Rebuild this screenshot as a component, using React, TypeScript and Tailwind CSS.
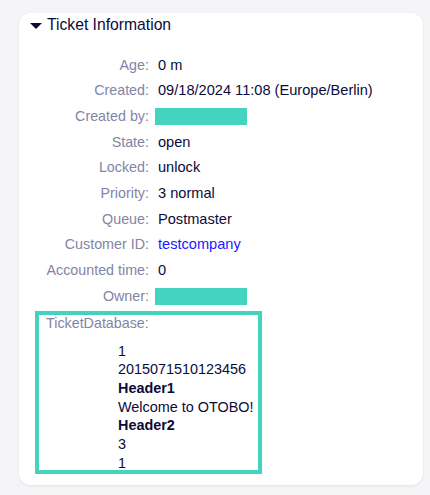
import React from 'react';

type Row = { label: string; value?: string; link?: boolean; redacted?: boolean };

const rows: Row[] = [
  { label: 'Age', value: '0 m' },
  { label: 'Created', value: '09/18/2024 11:08 (Europe/Berlin)' },
  { label: 'Created by', redacted: true },
  { label: 'State', value: 'open' },
  { label: 'Locked', value: 'unlock' },
  { label: 'Priority', value: '3 normal' },
  { label: 'Queue', value: 'Postmaster' },
  { label: 'Customer ID', value: 'testcompany', link: true },
  { label: 'Accounted time', value: '0' },
  { label: 'Owner', redacted: true },
];

// values shown in the dynamic field block, bold ones are headers
const dbLines: { text: string; bold?: boolean }[] = [
  { text: '1' },
  { text: '2015071510123456' },
  { text: 'Header1', bold: true },
  { text: 'Welcome to OTOBO!' },
  { text: 'Header2', bold: true },
  { text: '3' },
  { text: '1' },
];

const CaretDown = () => (
  <svg width="12" height="6" viewBox="0 0 12 6" className="mr-[5px] mt-[1px] shrink-0">
    <path d="M0 0 L12 0 L6 6 Z" fill="#0b0b3b" />
  </svg>
);

export default function App() {
  return (
    <div
      className="h-[495px] w-[430px] bg-[#f5f5f8] pt-[13px] pl-[19px]"
      style={{ fontFamily: '"Liberation Sans", Arial, sans-serif' }}
    >
      <div className="w-[404px] h-[472px] rounded-[12px] bg-white shadow-[0_1px_3px_rgba(0,0,0,0.08)] pt-[3px]">
        <div className="flex items-center pl-[11px] h-[18px] leading-[18px] text-[15.7px] text-[#0b0b3b]">
          <CaretDown />
          <span>Ticket Information</span>
        </div>

        <div className="mt-[18.3px]">
          {rows.map((r) => (
            <div key={r.label} className="flex items-center h-[25.7px] leading-[17px]">
              <div className="w-[130px] text-right text-[14.3px] text-[#8384a4]">{r.label}:</div>
              <div className="ml-[9px] text-[14.6px]">
                {r.redacted ? (
                  <div className="-ml-[3px] w-[92px] h-[17px] bg-[#43d3be]" />
                ) : (
                  <span className={r.link ? 'text-[#1a1aff]' : 'text-[#0b0b3b]'}>{r.value}</span>
                )}
              </div>
            </div>
          ))}
        </div>

        <div className="mt-[1.4px] ml-[16px] w-[227px] h-[163.3px] border-4 border-[#43d3be]">
          <div className="pl-[7px] leading-[17px] text-[14.3px] text-[#8384a4]">TicketDatabase:</div>
          <div className="mt-[10px] pl-[79px] leading-[18.7px] text-[14.4px] text-[#0b0b3b]">
            {dbLines.map((l, i) => (
              <div key={i} className={l.bold ? 'font-bold' : ''}>
                {l.text}
              </div>
            ))}
          </div>
        </div>
      </div>
    </div>
  );
}
